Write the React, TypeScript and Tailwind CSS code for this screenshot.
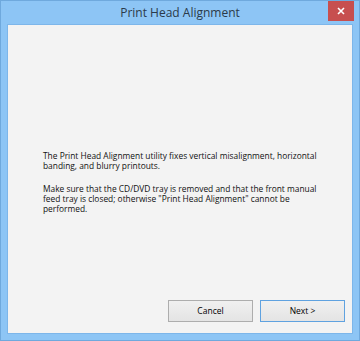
import React from 'react';

// ── Win8-style dialog: Print Head Alignment ──────────────────────────────────
const FONT = { fontFamily: '"Open Sans", "Noto Sans", "Liberation Sans", sans-serif' };

const DialogButton: React.FC<{ label: string; primary?: boolean }> = ({ label, primary }) => (
    <button
        className={`w-[85px] h-[22px] flex items-center justify-center text-[8.5px] text-black bg-gradient-to-b from-[#f0f0f0] to-[#e4e4e4] border ${
            primary ? 'border-[#5fa2e0]' : 'border-[#adadad]'
        }`}
    >
        {label}
    </button>
);

export default function App() {
    return (
        <div
            className="w-[360px] h-[341px] flex flex-col bg-[#8dc5f5] border border-[#6fa9dd] relative"
            style={FONT}
        >
            {/* Title bar */}
            <div className="h-[23px] flex items-center justify-center shrink-0">
                <span className="text-[12px] text-[#2b3a4a] leading-none">Print Head Alignment</span>
            </div>
            <div className="absolute top-0 right-[5px] w-[26px] h-[20px] bg-[#c74f4f] flex items-center justify-center">
                <svg width="8" height="8" viewBox="0 0 8 8">
                    <path d="M1 1 L7 7 M7 1 L1 7" stroke="#ffffff" strokeWidth="1.6" />
                </svg>
            </div>

            {/* Client area */}
            <div className="flex-1 mx-[6px] mb-[6px] bg-[#f3f3f3] border border-[#7db6ea] flex flex-col">
                <div className="pt-[126px] pl-[35px] pr-[25px] text-[8.4px] leading-[10px] text-[#111]">
                    <p>
                        The Print Head Alignment utility fixes vertical misalignment, horizontal banding, and blurry
                        printouts.
                    </p>
                    <p className="mt-[13px]">
                        Make sure that the CD/DVD tray is removed and that the front manual feed tray is closed;
                        otherwise "Print Head Alignment" cannot be performed.
                    </p>
                </div>

                <div className="mt-auto flex justify-end gap-[7px] pr-[7px] pb-[11px]">
                    <DialogButton label="Cancel" />
                    <DialogButton label="Next >" primary />
                </div>
            </div>
        </div>
    );
}
